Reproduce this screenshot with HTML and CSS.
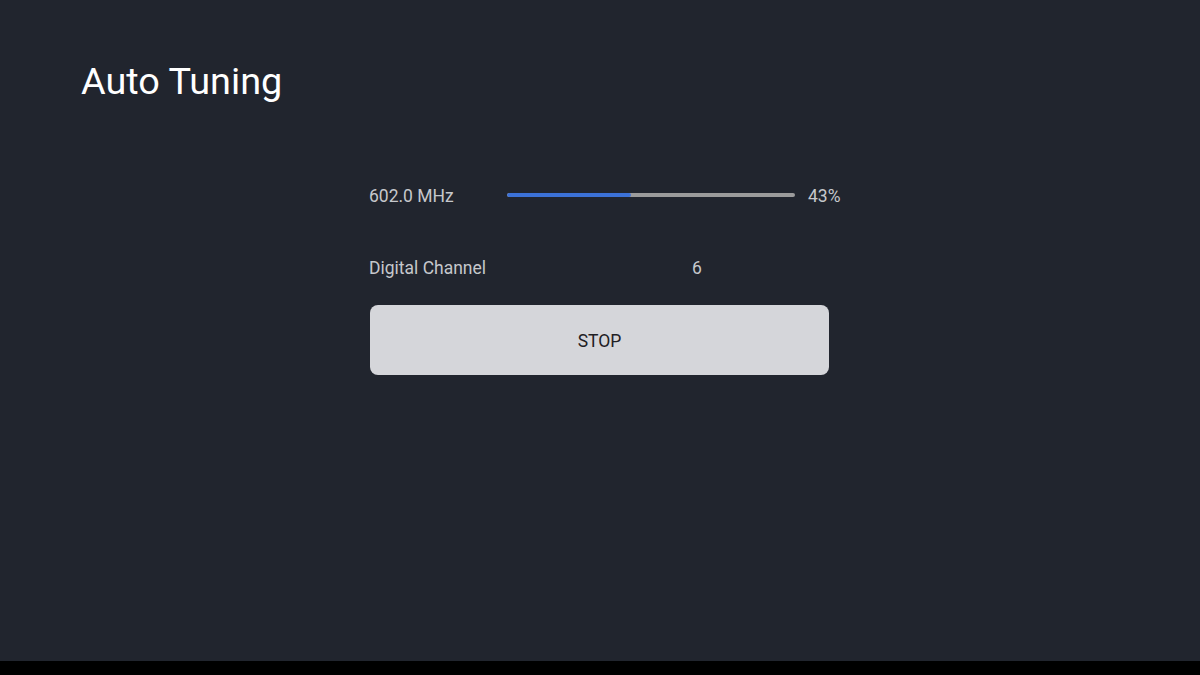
FILE: index.html
```html
<!DOCTYPE html>
<html>
<head>
    <title>Auto Tuning</title>
    <meta charset="utf-8">
    <link rel="stylesheet" href="styles.css">
</head>
<body>
<div class="screen">
    <h1 class="title">Auto Tuning</h1>
    <div class="content">
        <div class="row progress-row">
            <span class="label">602.0 MHz</span>
            <div class="track"><div class="fill" style="width: 43%"></div></div>
            <span class="percent">43%</span>
        </div>
        <div class="row channel-row">
            <span class="label">Digital Channel</span>
            <span class="value">6</span>
        </div>
        <button class="stop">STOP</button>
    </div>
</div>
<div class="bottom"></div>
</body>
</html>
```

FILE: styles.css
```css
* {
    margin: 0;
    padding: 0;
    box-sizing: border-box;
}

body {
    background: #000;
    font-family: Roboto, "Liberation Sans", sans-serif;
}

.screen {
    height: 661px;
    background: #21252e;
    padding-top: 59px;
}

.bottom {
    height: 14px;
    background: #000;
}

.title {
    margin-left: 81px;
    font-size: 37.8px;
    line-height: 44px;
    font-weight: 400;
    color: #fff;
}

.content {
    margin-left: 369px;
    margin-top: 81px;
    width: 480px;
}

.row {
    display: flex;
    align-items: center;
    height: 24px;
    font-size: 17.5px;
    line-height: 24px;
    color: #c6c8cc;
}

.row > * {
    flex: none;
}

.progress-row .label {
    width: 138px;
}

.track {
    width: 288px;
    height: 4px;
    border-radius: 2px;
    background: #9b9b9b;
    overflow: hidden;
    margin-top: -2px;
}

.fill {
    height: 100%;
    background: #3c72d8;
    border-radius: 2px;
}

.percent {
    margin-left: 13px;
}

.channel-row {
    margin-top: 48px;
}

.channel-row .label {
    width: 323px;
}

.stop {
    display: block;
    margin-top: 25px;
    margin-left: 1px;
    width: 459px;
    height: 70px;
    padding-top: 2px;
    border: none;
    border-radius: 8px;
    background: #d5d6da;
    color: #1f2024;
    font-family: Roboto, "Liberation Sans", sans-serif;
    font-size: 17.5px;
    font-weight: 400;
}
```
